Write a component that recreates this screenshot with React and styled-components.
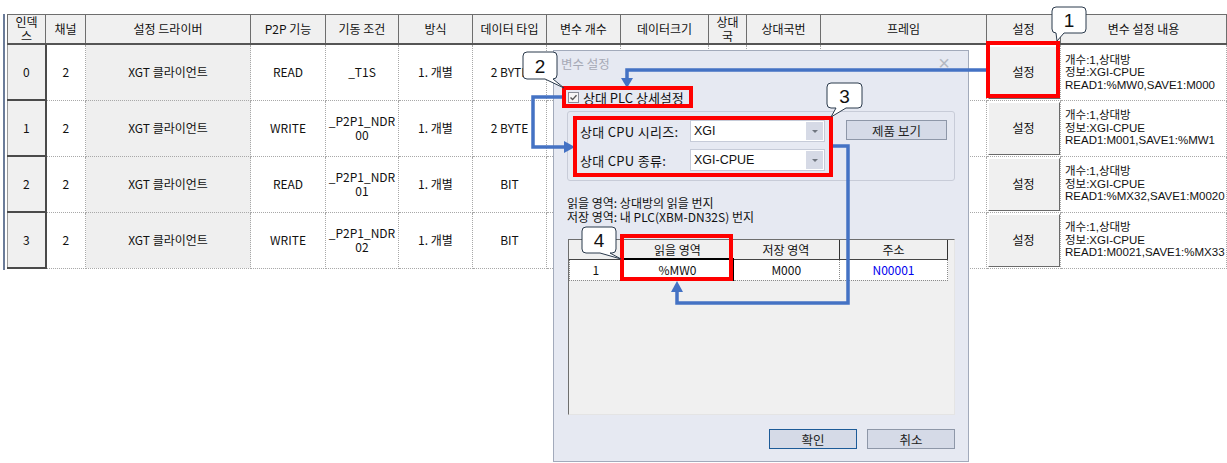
import React from 'react'
import styled, { createGlobalStyle } from 'styled-components'

const GlobalStyle = createGlobalStyle`
  body {
    margin: 0;
    background: #fff;
    font-family: "Noto Sans CJK KR", "Liberation Sans", sans-serif;
  }
`;

const Page = styled.div`
  position: relative;
  width: 1227px;
  height: 463px;
  overflow: hidden;
  padding: 14px 0 0 3px;
  box-sizing: border-box;
`;

const Frame = styled.div`
  border-left: 2px solid #6b7c99;
  padding-left: 2px;
  height: 256px;
  width: fit-content;
`;

const Tabela = styled.table`
  border-collapse: collapse;
  table-layout: fixed;
  width: 1219px;
  font-size: 12px;
  color: #111;
`;

const Th = styled.th`
  height: 28px;
  padding: 0;
  background: #f0f0f0;
  font-weight: normal;
  border: 1px solid #6e6e6e;
  border-bottom: 2px solid #555;
  line-height: 14px;
  text-align: center;
  white-space: nowrap;
`;

const Td = styled.td`
  height: 54px;
  padding: 0;
  text-align: center;
  background: ${(props) => (props.$shade ? '#efefef' : '#fff')};
  border: 1px dotted #a8a8a8;
  line-height: 14px;
`;

const IndexTd = styled(Td)`
  background: #f0f0f0;
  border: 1px solid #9a9a9a;
  border-right: 2px solid #4a4a4a;
  border-bottom: 2px solid #4a4a4a;
`;

const InfoTd = styled(Td)`
  text-align: left;
  padding-left: 4px;
  font-family: "Liberation Sans", "Noto Sans CJK KR", sans-serif;
  font-size: 11.5px;
  line-height: 12.5px;
  white-space: nowrap;
  overflow: hidden;
`;

const CellButton = styled.div`
  width: 72px;
  height: 53px;
  margin: 0 auto;
  box-sizing: border-box;
  background: #f0f0f0;
  border: 1px solid;
  border-color: #fff #6a6a6a #6a6a6a #fff;
  display: flex;
  align-items: center;
  justify-content: center;
`;

/* dialog */

const Dialog = styled.div`
  position: absolute;
  left: 553px;
  top: 50px;
  width: 416px;
  height: 412px;
  box-sizing: border-box;
  background: #e6e9f2;
  border: 1px solid #a2aabb;
  display: flex;
  flex-direction: column;
  font-size: 12px;
  color: #111;
`;

const TitleBar = styled.div`
  height: 24px;
  display: flex;
  align-items: center;
  justify-content: space-between;
  padding: 0 18px 0 7px;
  color: #a6aab6;
  font-size: 12.5px;
`;

const Close = styled.span`
  font-family: "Liberation Sans", sans-serif;
  font-size: 20px;
  color: #b4b8c2;
`;

const DialogBody = styled.div`
  padding: 0 13px;
  display: flex;
  flex-direction: column;
`;

const CheckRow = styled.label`
  margin: 14px 0 0 1px;
  height: 16px;
  display: flex;
  align-items: center;
  gap: 4px;
  font-size: 13px;
`;

const CheckBox = styled.span`
  width: 11px;
  height: 11px;
  box-sizing: border-box;
  border: 1px solid #8a8f99;
  background: #f6f6f6;
  display: flex;
  align-items: center;
  justify-content: center;
`;

const GroupBox = styled.div`
  margin-top: 6px;
  height: 70px;
  box-sizing: border-box;
  border: 1px solid #c8ccd8;
  border-radius: 3px;
  padding: 8px 0 0 12px;
  display: grid;
  grid-template-columns: 89px 135px 101px;
  grid-template-rows: 22px 22px;
  column-gap: 21px;
  row-gap: 7px;
  align-items: center;
`;

const FieldLabel = styled.span`
  font-size: 13px;
  letter-spacing: 0.3px;
  white-space: nowrap;
`;

const Combo = styled.div`
  height: 22px;
  box-sizing: border-box;
  background: #fff;
  border: 1px solid #c6cbd8;
  display: flex;
  align-items: center;
`;

const ComboText = styled.span`
  flex: 1;
  padding-left: 3px;
  font-family: "Liberation Sans", sans-serif;
  font-size: 12.5px;
`;

const ComboArrow = styled.span`
  width: 17px;
  align-self: stretch;
  margin: 1px;
  background: #d6dae6;
  display: flex;
  align-items: center;
  justify-content: center;

  &::after {
    content: '';
    border-left: 3px solid transparent;
    border-right: 3px solid transparent;
    border-top: 3px solid #707680;
  }
`;

const DlgButton = styled.button`
  width: ${(props) => props.$w || 88}px;
  height: 20px;
  padding: 0;
  box-sizing: border-box;
  background: #d5dae7;
  border: 1px solid ${(props) => (props.$primary ? '#1d5b98' : '#8e97a8')};
  font-family: "Noto Sans CJK KR", sans-serif;
  font-size: 12.5px;
  color: #222;
  align-self: start;
`;

const InfoText = styled.div`
  margin-top: 15px;
  line-height: 14px;
  font-size: 12px;
`;

const VarGrid = styled.div`
  margin: 15px 0 0 1px;
  width: 387px;
  height: 176px;
  box-sizing: border-box;
  background: #f0f0f0;
  border: 1px solid;
  border-color: #6e6e6e #e4e4e4 #e4e4e4 #6e6e6e;
`;

const VarTable = styled.table`
  border-collapse: collapse;
  table-layout: fixed;
  width: 379px;
  font-size: 12px;
`;

const VTh = styled.th`
  height: 18px;
  padding: 0;
  font-weight: normal;
  background: #f0f0f0;
  border-right: 1px solid #333;
  border-bottom: 1px solid #444;
  text-align: center;
`;

const VTd = styled.td`
  height: 19px;
  padding: 0;
  background: #fff;
  text-align: center;
  color: ${(props) => (props.$link ? '#0000ee' : '#111')};
  border: ${(props) => (props.$selected ? '2px solid #000' : '1px dotted #8a8a8a')};
`;

const Footer = styled.div`
  margin-top: 14px;
  display: flex;
  justify-content: flex-end;
  gap: 10px;
`;

/* annotations */

const Overlay = styled.svg`
  position: absolute;
  left: 0;
  top: 0;
  pointer-events: none;
`;

const columns = [
  { w: 38, label: ['인덱', '스'] },
  { w: 40, label: ['채널'] },
  { w: 165, label: ['설정 드라이버'] },
  { w: 75, label: ['P2P 기능'] },
  { w: 73, label: ['기동 조건'] },
  { w: 74, label: ['방식'] },
  { w: 74, label: ['데이터 타입'] },
  { w: 74, label: ['변수 개수'] },
  { w: 88, label: ['데이터크기'] },
  { w: 38, label: ['상대', '국'] },
  { w: 74, label: ['상대국번'] },
  { w: 166, label: ['프레임'] },
  { w: 74, label: ['설정'] },
  { w: 166, label: ['변수 설정 내용'] },
];

const rows = [
  { p2p: 'READ', cond: ['_T1S'], type: '2 BYTE', last: 'READ1:%MW0,SAVE1:M000' },
  { p2p: 'WRITE', cond: ['_P2P1_NDR', '00'], type: '2 BYTE', last: 'READ1:M001,SAVE1:%MW1' },
  { p2p: 'READ', cond: ['_P2P1_NDR', '01'], type: 'BIT', last: 'READ1:%MX32,SAVE1:M0020' },
  { p2p: 'WRITE', cond: ['_P2P1_NDR', '02'], type: 'BIT', last: 'READ1:M0021,SAVE1:%MX33' },
];

const lines = (arr) => arr.map((t, i) => (
  <React.Fragment key={i}>{i > 0 && <br />}{t}</React.Fragment>
));

const calloutPath = ({ x, y, w, h, bl, br, tx, ty }) => {
  const r = 4;
  const b = y + h;
  return `M${x + r},${y} H${x + w - r} Q${x + w},${y} ${x + w},${y + r} V${b - r} Q${x + w},${b} ${x + w - r},${b} H${br} L${tx},${ty} L${bl},${b} H${x + r} Q${x},${b} ${x},${b - r} V${y + r} Q${x},${y} ${x + r},${y} Z`;
};

const callouts = [
  { n: 1, x: 1052, y: 7, w: 34, h: 26, bl: 1056, br: 1064, tx: 1057, ty: 41 },
  { n: 2, x: 523, y: 52, w: 34, h: 27, bl: 545, br: 553, tx: 564, ty: 88 },
  { n: 3, x: 827, y: 83, w: 35, h: 25, bl: 836, br: 846, tx: 831, ty: 117 },
  { n: 4, x: 582, y: 227, w: 34, h: 26, bl: 600, br: 610, tx: 621, ty: 259 },
];

const redBoxes = [
  { x: 988, y: 43, w: 70, h: 53 },
  { x: 564, y: 88, w: 127, h: 18 },
  { x: 575, y: 118, w: 256, h: 57 },
  { x: 622, y: 236, w: 109, h: 43 },
];

const Annotations = () => (
  <Overlay width="1227" height="463" viewBox="0 0 1227 463">
    <g stroke="#4472c4" strokeWidth="3.5" fill="none">
      <path d="M986,70 H627 V79" />
      <path d="M566,97 H533 V147 H565" />
      <path d="M831,146 H848 V303 H677 V291" />
    </g>
    <g fill="#4472c4">
      <polygon points="621,78 633,78 627,88" />
      <polygon points="564,141 564,153 575,147" />
      <polygon points="671,292 683,292 677,281" />
    </g>
    <g stroke="#ff0000" strokeWidth="4" fill="none">
      {redBoxes.map((b, i) => <rect key={i} x={b.x} y={b.y} width={b.w} height={b.h} />)}
    </g>
    {callouts.map((c) => (
      <g key={c.n}>
        <path d={calloutPath(c)} fill="#fff" stroke="#2b3a4c" strokeWidth="1" />
        <text
          x={c.x + c.w / 2}
          y={c.y + c.h / 2 + 7}
          textAnchor="middle"
          fontFamily="Liberation Sans, sans-serif"
          fontSize="19"
          fill="#111"
        >
          {c.n}
        </text>
      </g>
    ))}
  </Overlay>
);

const App = () => {
  return (
    <Page>
      <GlobalStyle />
      <Frame>
        <Tabela>
          <colgroup>
            {columns.map((c, i) => <col key={i} style={{ width: c.w }} />)}
          </colgroup>
          <thead>
            <tr>
              {columns.map((c, i) => <Th key={i}>{lines(c.label)}</Th>)}
            </tr>
          </thead>
          <tbody>
            {rows.map((r, i) => (
              <tr key={i}>
                <IndexTd>{i}</IndexTd>
                <Td>2</Td>
                <Td $shade>XGT 클라이언트</Td>
                <Td>{r.p2p}</Td>
                <Td>{lines(r.cond)}</Td>
                <Td>1. 개별</Td>
                <Td>{r.type}</Td>
                <Td />
                <Td />
                <Td />
                <Td />
                <Td />
                <Td><CellButton>설정</CellButton></Td>
                <InfoTd>
                  개수:1,상대방<br />
                  정보:XGI-CPUE<br />
                  {r.last}
                </InfoTd>
              </tr>
            ))}
          </tbody>
        </Tabela>
      </Frame>

      <Dialog>
        <TitleBar>
          <span>변수 설정</span>
          <Close>×</Close>
        </TitleBar>
        <DialogBody>
          <CheckRow>
            <CheckBox>
              <svg width="9" height="9" viewBox="0 0 9 9">
                <path d="M1.5,4.5 L3.6,6.6 L7.5,2.2" stroke="#555" strokeWidth="1.4" fill="none" />
              </svg>
            </CheckBox>
            상대 PLC 상세설정
          </CheckRow>

          <GroupBox>
            <FieldLabel>상대 CPU 시리즈:</FieldLabel>
            <Combo><ComboText>XGI</ComboText><ComboArrow /></Combo>
            <DlgButton $w={101}>제품 보기</DlgButton>
            <FieldLabel>상대 CPU 종류:</FieldLabel>
            <Combo><ComboText>XGI-CPUE</ComboText><ComboArrow /></Combo>
          </GroupBox>

          <InfoText>
            읽을 영역: 상대방의 읽을 번지<br />
            저장 영역: 내 PLC(XBM-DN32S) 번지
          </InfoText>

          <VarGrid>
            <VarTable>
              <colgroup>
                <col style={{ width: 53 }} />
                <col style={{ width: 110 }} />
                <col style={{ width: 107 }} />
                <col style={{ width: 108 }} />
              </colgroup>
              <thead>
                <tr>
                  <VTh />
                  <VTh>읽을 영역</VTh>
                  <VTh>저장 영역</VTh>
                  <VTh>주소</VTh>
                </tr>
              </thead>
              <tbody>
                <tr>
                  <VTd>1</VTd>
                  <VTd $selected>%MW0</VTd>
                  <VTd>M000</VTd>
                  <VTd $link>N00001</VTd>
                </tr>
              </tbody>
            </VarTable>
          </VarGrid>

          <Footer>
            <DlgButton $primary>확인</DlgButton>
            <DlgButton>취소</DlgButton>
          </Footer>
        </DialogBody>
      </Dialog>

      <Annotations />
    </Page>
  )
}

export default App
